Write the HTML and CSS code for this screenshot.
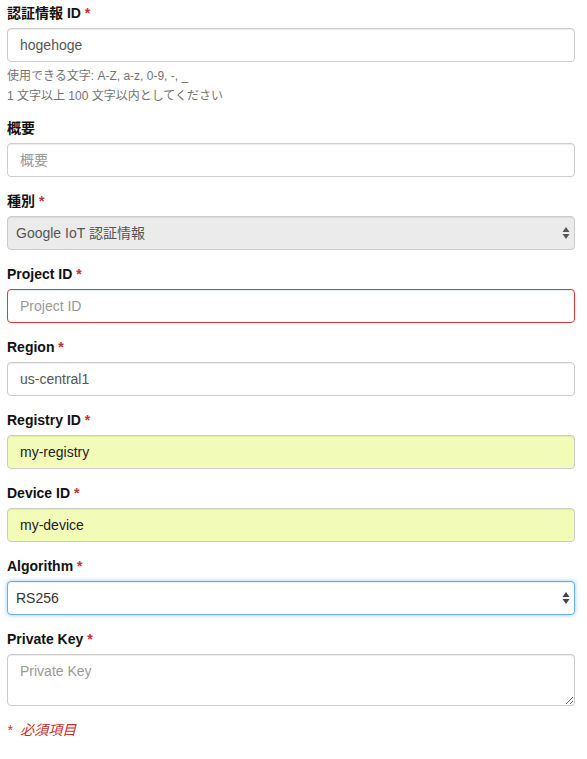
FILE: index.html
```html
<!DOCTYPE html>
<html lang="ja">
<head>
<meta charset="utf-8">
<title>認証情報</title>
<link rel="stylesheet" href="styles.css">
</head>
<body>
<form class="form">
  <div class="form-group has-help">
    <label class="label">認証情報 ID <span class="req">*</span></label>
    <input class="control" type="text" value="hogehoge">
    <div class="help-block">
      <div>使用できる文字: A-Z, a-z, 0-9, -, _</div>
      <div>1 文字以上 100 文字以内としてください</div>
    </div>
  </div>
  <div class="form-group">
    <label class="label">概要</label>
    <input class="control" type="text" placeholder="概要">
  </div>
  <div class="form-group">
    <label class="label">種別 <span class="req">*</span></label>
    <div class="select-wrap">
      <select class="control select disabled" disabled>
        <option>Google IoT 認証情報</option>
      </select>
      <svg class="arrows" width="8" height="14" viewBox="0 0 8 14"><path d="M4 1 L7.5 6 H0.5 Z M4 13 L7.5 8 H0.5 Z" fill="#555"/></svg>
    </div>
  </div>
  <div class="form-group">
    <label class="label">Project ID <span class="req">*</span></label>
    <input class="control error" type="text" placeholder="Project ID">
  </div>
  <div class="form-group">
    <label class="label">Region <span class="req">*</span></label>
    <input class="control" type="text" value="us-central1">
  </div>
  <div class="form-group">
    <label class="label">Registry ID <span class="req">*</span></label>
    <input class="control autofill" type="text" value="my-registry">
  </div>
  <div class="form-group">
    <label class="label">Device ID <span class="req">*</span></label>
    <input class="control autofill" type="text" value="my-device">
  </div>
  <div class="form-group">
    <label class="label">Algorithm <span class="req">*</span></label>
    <div class="select-wrap">
      <select class="control select focus">
        <option>RS256</option>
      </select>
      <svg class="arrows" width="8" height="14" viewBox="0 0 8 14"><path d="M4 1 L7.5 6 H0.5 Z M4 13 L7.5 8 H0.5 Z" fill="#444"/></svg>
    </div>
  </div>
  <div class="form-group">
    <label class="label">Private Key <span class="req">*</span></label>
    <textarea class="control textarea" rows="2" placeholder="Private Key"></textarea>
  </div>
  <p class="required-note"><span class="note-star">*</span> 必須項目</p>
</form>
</body>
</html>
```
FILE: styles.css
```css
html, body {
  margin: 0;
  padding: 0;
  background: #fff;
}
body {
  font-family: "Liberation Sans", Arial, "Noto Sans CJK JP", sans-serif;
  font-size: 14px;
  line-height: 20px;
  color: #333;
}
.form {
  padding: 3px 12px 0 7px;
}
.form-group {
  margin-bottom: 14px;
}
.form-group.has-help {
  margin-bottom: 12px;
}
.label {
  display: block;
  font-weight: bold;
  color: #111;
  margin-bottom: 5px;
  line-height: 20px;
}
.req {
  color: #c9302c;
  font-weight: bold;
}
.control {
  display: block;
  box-sizing: border-box;
  width: 100%;
  height: 34px;
  margin: 0;
  padding: 6px 12px;
  font-family: "Liberation Sans", Arial, "Noto Sans CJK JP", sans-serif;
  font-size: 14px;
  line-height: 20px;
  color: #555;
  background: #fff;
  border: 1px solid #ccc;
  border-radius: 4px;
  box-shadow: inset 0 1px 1px rgba(0,0,0,0.075);
  outline: none;
}
.control::placeholder {
  color: #999;
}
.control.error {
  border-color: #e0393b;
}
.control.autofill {
  background: #f3fbb9;
  color: #222;
}
.select-wrap {
  position: relative;
}
.select {
  appearance: none;
  -webkit-appearance: none;
  padding-left: 8px;
}
.select.disabled {
  background: #ebebeb;
  color: #555;
  opacity: 1;
}
.select.focus {
  border-color: #66afe9;
  box-shadow: inset 0 1px 1px rgba(0,0,0,0.075), 0 0 4px rgba(102,175,233,0.7);
  color: #333;
}
.arrows {
  position: absolute;
  right: 5px;
  top: 10px;
  pointer-events: none;
}
.textarea {
  height: 52px;
  resize: vertical;
}
.help-block {
  margin-top: 4px;
  font-size: 12px;
  line-height: 20px;
  color: #737373;
}
.required-note {
  margin: 0;
  font-size: 14px;
  line-height: 20px;
  color: #c9302c;
  font-style: italic;
}
.note-star {
  margin-right: 4px;
}
```
